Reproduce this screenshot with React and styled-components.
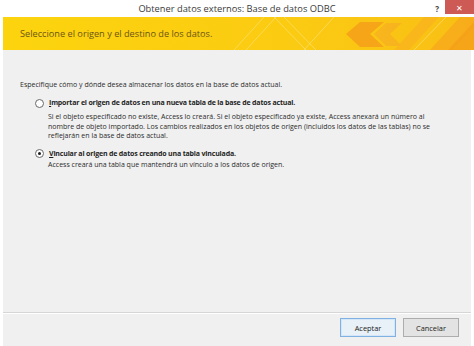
import styled, { createGlobalStyle } from "styled-components";

const Global = createGlobalStyle`
  html, body {
    margin: 0;
    padding: 0;
    background: #ffffff;
  }
  body {
    font-family: "Open Sans", "Noto Sans", sans-serif;
  }
`;

const Window = styled.div`
  width: 474px;
  height: 346px;
  display: flex;
  flex-direction: column;
  background: #ffffff;
  overflow: hidden;
`;

const TitleBar = styled.div`
  height: 17px;
  display: flex;
  align-items: center;
  justify-content: center;
  position: relative;
  font-size: 9.3px;
  color: #3a3a3a;
`;

const Controls = styled.div`
  position: absolute;
  top: 0;
  right: 0;
  display: flex;
  align-items: flex-start;
  gap: 6px;
`;

const Help = styled.span`
  font-size: 8px;
  font-weight: 700;
  color: #444;
  margin-top: 3px;
`;

const Close = styled.div`
  width: 29px;
  height: 14px;
  background: #cd5a55;
  color: #fff;
  display: flex;
  align-items: center;
  justify-content: center;
  font-size: 8px;
`;

const Banner = styled.div`
  height: 33px;
  margin-left: 3px;
  position: relative;
  display: flex;
  align-items: center;
  padding-left: 17px;
  background: linear-gradient(90deg, #fcd40e 0%, #fbcb12 60%, #f9bf15 100%);
  overflow: hidden;
`;

const BannerArt = styled.svg`
  position: absolute;
  right: 0;
  top: 0;
`;

const BannerText = styled.span`
  position: relative;
  font-size: 9.2px;
  color: #6b5516;
`;

const Body = styled.div`
  flex: 1;
  margin: 0 3px;
  background: #f0f0f0;
  padding: 30px 0 0 17px;
  font-size: 7px;
  color: #2b2b2b;
`;

const Intro = styled.div`
  line-height: 10px;
`;

const Options = styled.div`
  padding-left: 15px;
  margin-top: 8px;
  display: flex;
  flex-direction: column;
  gap: 8px;
`;

const Option = styled.div`
  display: flex;
  flex-direction: column;
`;

const OptionHead = styled.div`
  display: flex;
  align-items: center;
  gap: 5px;
  line-height: 10px;
  font-weight: 700;
  letter-spacing: -0.17px;
  color: #1f1f1f;
`;

const Radio = styled.span`
  width: 7px;
  height: 7px;
  border-radius: 50%;
  border: 1px solid #6a6a6a;
  background: #ffffff;
  display: flex;
  align-items: center;
  justify-content: center;
  &::after {
    content: "";
    width: 3px;
    height: 3px;
    border-radius: 50%;
    background: ${(p) => (p.$checked ? "#1a1a1a" : "transparent")};
  }
`;

const Key = styled.span`
  text-decoration: underline;
`;

const Desc = styled.div`
  padding-left: 13px;
  margin-top: ${(p) => p.$gap || 4}px;
  line-height: 9.5px;
  width: 395px;
`;

const Footer = styled.div`
  height: 28px;
  margin: 0 3px;
  background: #f0f0f0;
  border-top: 1px solid #d6d6d6;
  box-shadow: inset 0 1px 0 #ffffff;
  display: flex;
  justify-content: flex-end;
  align-items: flex-start;
  padding: 5px 12px 0 0;
  gap: 7px;
`;

const Button = styled.button`
  width: 56px;
  height: 19px;
  padding: 0;
  font-family: "Open Sans", "Noto Sans", sans-serif;
  font-size: 7.4px;
  color: #222;
  background: ${(p) => (p.$primary ? "#e8f0f8" : "#e3e3e3")};
  border: 1px solid ${(p) => (p.$primary ? "#7fb2e0" : "#adadad")};
  box-shadow: ${(p) => (p.$primary ? "inset 0 0 0 1px #d4e6f7" : "none")};
`;

function Art() {
  return (
    <BannerArt width="240" height="33" viewBox="0 0 240 33">
      <g stroke="#fde37a" strokeWidth="0.8" opacity="0.8">
        <line x1="0" y1="33" x2="30" y2="0" />
        <line x1="12" y1="33" x2="42" y2="0" />
        <line x1="40" y1="0" x2="72" y2="33" />
        <line x1="50" y1="0" x2="82" y2="33" />
        <line x1="70" y1="33" x2="100" y2="0" />
        <line x1="180" y1="33" x2="212" y2="0" />
      </g>
      <polygon points="112,17 126,5 150,5 136,17 150,30 126,30" fill="#f6a11a" opacity="0.9" />
      <polygon points="140,17 152,6 168,6 156,17 168,29 152,29" fill="#f8b020" opacity="0.8" />
      <polygon points="160,33 190,0 205,0 175,33" fill="#f9b31e" opacity="0.75" />
      <polygon points="196,33 226,0 240,0 240,10 218,33" fill="#f7a81c" opacity="0.8" />
      <polygon points="214,33 240,5 240,33" fill="#f6a01a" opacity="0.85" />
    </BannerArt>
  );
}

export default function App() {
  return (
    <>
      <Global />
      <Window>
        <TitleBar>
          Obtener datos externos: Base de datos ODBC
          <Controls>
            <Help>?</Help>
            <Close>✕</Close>
          </Controls>
        </TitleBar>
        <Banner>
          <Art />
          <BannerText>Seleccione el origen y el destino de los datos.</BannerText>
        </Banner>
        <Body>
          <Intro>Especifique cómo y dónde desea almacenar los datos en la base de datos actual.</Intro>
          <Options>
            <Option>
              <OptionHead>
                <Radio />
                <span><Key>I</Key>mportar el origen de datos en una nueva tabla de la base de datos actual.</span>
              </OptionHead>
              <Desc>
                Si el objeto especificado no existe, Access lo creará. Si el objeto especificado ya existe, Access anexará un número al nombre de objeto importado. Los cambios realizados en los objetos de origen (incluidos los datos de las tablas) no se reflejarán en la base de datos actual.
              </Desc>
            </Option>
            <Option>
              <OptionHead>
                <Radio $checked />
                <span><Key>V</Key>incular al origen de datos creando una tabla vinculada.</span>
              </OptionHead>
              <Desc $gap={1}>Access creará una tabla que mantendrá un vínculo a los datos de origen.</Desc>
            </Option>
          </Options>
        </Body>
        <Footer>
          <Button $primary>Aceptar</Button>
          <Button>Cancelar</Button>
        </Footer>
      </Window>
    </>
  );
}
